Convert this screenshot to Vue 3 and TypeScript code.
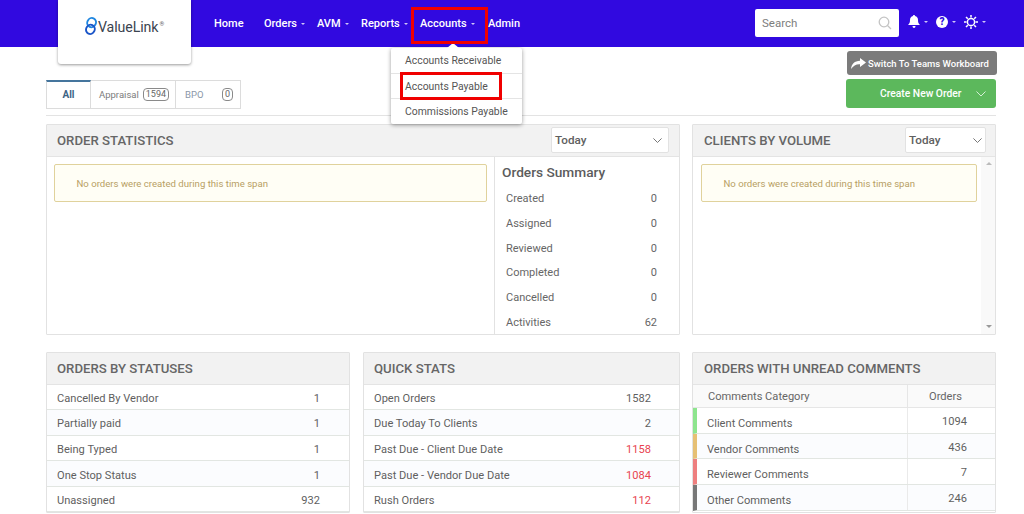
<script setup lang="ts">
const nav = [
  { label: 'Home', caret: false, w: 50 },
  { label: 'Orders', caret: true, w: 53 },
  { label: 'AVM', caret: true, w: 44 },
  { label: 'Reports', caret: true, w: 59 },
  { label: 'Accounts', caret: true, w: 68, hot: true },
  { label: 'Admin', caret: false, w: 40 },
]
const summary = [['Created', 0], ['Assigned', 0], ['Reviewed', 0], ['Completed', 0], ['Cancelled', 0], ['Activities', 62]]
const statuses = [['Cancelled By Vendor', 1], ['Partially paid', 1], ['Being Typed', 1], ['One Stop Status', 1], ['Unassigned', 932]]
const quick = [
  ['Open Orders', 1582, false], ['Due Today To Clients', 2, false], ['Past Due - Client Due Date', 1158, true],
  ['Past Due - Vendor Due Date', 1084, true], ['Rush Orders', 112, true],
]
const comments = [
  ['Client Comments', 1094, '#8ee58e'], ['Vendor Comments', 436, '#e6c074'],
  ['Reviewer Comments', 7, '#ee7f7f'], ['Other Comments', 246, '#777777'],
]
</script>

<template>
  <div class="page">
    <header class="top">
      <div class="logo">
        <svg width="12" height="18" viewBox="0 0 12 18" fill="none" stroke-width="1.900">
          <ellipse cx="6.600" cy="5.600" rx="4.300" ry="4.700" stroke="#1f86e0" transform="rotate(25 6.600 5.600)" />
          <ellipse cx="5.400" cy="12.400" rx="4.300" ry="4.700" stroke="#1a55c8" transform="rotate(25 5.400 12.400)" />
        </svg>
        <span class="logo-text">ValueLink</span><sup class="reg">®</sup>
      </div>
      <nav class="nav">
        <div v-for="n in nav" :key="n.label" class="nav-item" :class="{ hot: n.hot }" :style="{ width: n.w + 'px' }">
          {{ n.label }}<span v-if="n.caret" class="caret"></span>
        </div>
      </nav>
      <div class="right">
        <div class="search">
          <span>Search</span>
          <svg width="14" height="14" viewBox="0 0 14 14" fill="none" stroke="#c4c4c4" stroke-width="1.300">
            <circle cx="6" cy="6" r="4.800" /><path d="M9.500 9.500 13 13" />
          </svg>
        </div>
        <div class="tool">
          <svg width="12" height="13" viewBox="0 0 12 13" fill="#fff"><path d="M6 0c.6 0 1 .4 1 1 2 .4 3 2 3 4 0 2.500.6 3.500 2 5H0c1.400-1.500 2-2.500 2-5 0-2 1-3.600 3-4 0-.6.400-1 1-1Z" /><path d="M4.500 11h3C7.500 12 6.800 13 6 13s-1.500-1-1.500-2Z" /></svg>
          <span class="caret"></span>
        </div>
        <div class="tool">
          <span class="help">?</span><span class="caret"></span>
        </div>
        <div class="tool">
          <svg width="14" height="14" viewBox="0 0 14 14" fill="none" stroke="#fff" stroke-width="1.500">
            <circle cx="7" cy="7" r="3.600" />
            <path d="M7 0v2.500M7 11.500V14M0 7h2.500M11.500 7H14M2 2l1.800 1.800M10.200 10.200 12 12M12 2l-1.800 1.800M3.800 10.200 2 12" />
          </svg>
          <span class="caret"></span>
        </div>
      </div>
    </header>

    <div class="menu">
      <div class="menu-item">Accounts Receivable</div>
      <div class="menu-item">Accounts Payable</div>
      <div class="menu-item">Commissions Payable</div>
    </div>
    <div class="mark-menu"></div>

    <main class="main">
      <div class="toolbar">
        <div class="tabs">
          <div class="tab active">All</div>
          <div class="tab appraisal">Appraisal <span class="count">1594</span></div>
          <div class="tab bpo"><span>BPO</span> <span class="count">0</span></div>
        </div>
        <div class="actions">
          <div class="switch">
            <svg width="15" height="11" viewBox="0 0 15 11" fill="#fff"><path d="M9 0l6 4.500L9 9V6.200C5 6 2.500 7.500 0 11 .6 6 3.500 3 9 2.800V0Z" /></svg>
            Switch To Teams Workboard
          </div>
          <div class="create">
            <span>Create New Order</span>
            <svg width="10" height="6" viewBox="0 0 10 6" fill="none" stroke="#d4efd4" stroke-width="1"><path d="M.5.5 5 5 9.500.5" /></svg>
          </div>
        </div>
      </div>
      <div class="rule"></div>

      <div class="row first">
        <section class="panel wide">
          <div class="head tall">
            <h2>ORDER STATISTICS</h2>
            <div class="select big"><span>Today</span><svg width="9" height="5" viewBox="0 0 9 5" fill="none" stroke="#777" stroke-width="1"><path d="M.4.4 4.500 4.500 8.600.4" /></svg></div>
          </div>
          <div class="stats-body">
            <div class="stats-left">
              <div class="alert">No orders were created during this time span</div>
            </div>
            <div class="summary">
              <h3>Orders Summary</h3>
              <div v-for="s in summary" :key="s[0]" class="sum-row"><span>{{ s[0] }}</span><span>{{ s[1] }}</span></div>
            </div>
          </div>
        </section>
        <section class="panel side">
          <div class="head tall">
            <h2>CLIENTS BY VOLUME</h2>
            <div class="select small"><span>Today</span><svg width="9" height="5" viewBox="0 0 9 5" fill="none" stroke="#777" stroke-width="1"><path d="M.4.4 4.500 4.500 8.600.4" /></svg></div>
          </div>
          <div class="volume-body">
            <div class="volume-left"><div class="alert">No orders were created during this time span</div></div>
            <div class="scroll"><span class="up"></span><span class="down"></span></div>
          </div>
        </section>
      </div>

      <div class="row second">
        <section class="panel col-a">
          <div class="head"><h2>ORDERS BY STATUSES</h2></div>
          <div v-for="(s, i) in statuses" :key="s[0]" class="line" :class="{ odd: i % 2 === 1 }">
            <span>{{ s[0] }}</span><span class="num-a">{{ s[1] }}</span>
          </div>
        </section>
        <section class="panel col-b">
          <div class="head"><h2>QUICK STATS</h2></div>
          <div v-for="(q, i) in quick" :key="String(q[0])" class="line" :class="{ odd: i % 2 === 1 }">
            <span>{{ q[0] }}</span><span class="num-b" :class="{ red: q[2] }">{{ q[1] }}</span>
          </div>
        </section>
        <section class="panel side">
          <div class="head"><h2>ORDERS WITH UNREAD COMMENTS</h2></div>
          <div class="c-head"><span class="c-cat">Comments Category</span><span class="c-ord">Orders</span></div>
          <div v-for="(c, i) in comments" :key="String(c[0])" class="c-row" :class="{ odd: i % 2 === 1 }" :style="{ borderLeftColor: String(c[2]) }">
            <span class="c-name">{{ c[0] }}</span><span class="c-val">{{ c[1] }}</span>
          </div>
        </section>
      </div>
    </main>
  </div>
</template>

<style>
html, body { margin: 0; background: #fff; overflow: hidden; }
</style>

<style scoped>
* { box-sizing: border-box; }
.page { position: relative; width: 1024px; height: 514px; overflow: hidden; font-family: Roboto, "Liberation Sans", sans-serif; font-size: 11px; color: #5c5c5c; }
.top { height: 46.500px; background: #3109e0; display: flex; align-items: flex-start; padding-left: 58px; color: #fff; }
.logo { width: 133px; height: 64px; background: #fff; border-radius: 0 0 3px 3px; box-shadow: 0 1px 3px rgba(0,0,0,.4); display: flex; align-items: flex-start; padding: 17px 0 0 27px; position: relative; z-index: 3; }
.logo-text { font-size: 14.200px; color: #3c4450; line-height: 19px; margin: 1px 0 0 1px; letter-spacing: -.1px; }
.reg { font-size: 6px; color: #666; line-height: 10px; margin: 2px 0 0 1px; }
.nav { display: flex; margin-left: 23px; height: 46px; align-items: center; font-weight: 500; font-size: 11px; }
.nav-item { position: relative; white-space: nowrap; display: flex; align-items: center; font-weight: 500; font-size: 11px; color: #fff; height: 34px; }
.nav-item.hot::after { content: ""; box-sizing: border-box; position: absolute; left: -9px; top: 1px; width: 76.500px; height: 36.500px; border: 3.500px solid #f00000; z-index: 6; }
.caret { display: inline-block; width: 0; height: 0; margin-left: 4px; margin-top: 1px; border-left: 2px solid transparent; border-right: 2px solid transparent; border-top: 2px solid #cfc6f7; }
.right { margin-left: auto; display: flex; align-items: center; height: 46px; padding-right: 30px; }
.search { width: 144px; height: 28px; margin-top: -1px; background: #fff; border-radius: 2px; display: flex; align-items: center; justify-content: space-between; padding: 0 7px; color: #7d7d7d; font-size: 11.500px; margin-right: 9px; }
.tool { display: flex; align-items: center; margin-right: 8px; height: 20px; margin-top: -3px; }
.help { width: 12px; height: 12px; border-radius: 50%; background: #fff; color: #3109e0; font-weight: 900; font-size: 10px; line-height: 12px; text-align: center; }

.menu { position: absolute; left: 391px; top: 48px; width: 131px; height: 76px; background: #fff; border-radius: 2px; box-shadow: 0 1px 4px rgba(0,0,0,.4); z-index: 4; }
.menu::before { content: ""; position: absolute; left: 56px; top: -5px; border-left: 6px solid transparent; border-right: 6px solid transparent; border-bottom: 5px solid #fff; }
.menu-item { height: 25.500px; padding-left: 14px; line-height: 25px; font-size: 10.400px; color: #555; border-bottom: 1px solid #e4e4e4; white-space: nowrap; }
.menu-item:last-child { border-bottom: 0; }
.mark-menu { position: absolute; left: 399.500px; top: 71.500px; width: 102px; height: 28px; border: 3.500px solid #f00000; z-index: 5; }

.main { padding: 0 28px 0 46px; }
.toolbar { height: 68px; display: flex; justify-content: space-between; align-items: flex-start; }
.tabs { display: flex; margin-top: 33px; height: 29px; border: 1px solid #dcdcdc; border-left: 0; }
.tab { height: 27px; line-height: 27px; font-size: 9.500px; color: #7c7c7c; border-right: 1px solid #dcdcdc; white-space: nowrap; display: flex; align-items: center; }
.tab.active { width: 45px; margin-top: -1px; height: 28px; border-top: 2px solid #45759d; border-left: 1px solid #dcdcdc; justify-content: center; font-weight: 700; color: #3d6485; font-size: 10px; }
.tab.appraisal { width: 85px; padding-left: 8px; gap: 4px; }
.tab.bpo { width: 64px; border-right: 0; padding: 0 7px 0 9px; justify-content: space-between; color: #8a97a8; }
.count { border: 1px solid #8a8a8a; border-radius: 4px; font-size: 9px; line-height: 11px; height: 13px; padding: 0 2px; color: #666; }
.actions { width: 152px; margin-top: 4.500px; display: flex; flex-direction: column; align-items: flex-end; }
.switch { width: 150px; height: 24px; margin-right: -1px; background: #7b7b7b; border-radius: 3px; color: #fff; font-size: 9.500px; font-weight: 500; display: flex; align-items: center; gap: 2px; padding-left: 4px; white-space: nowrap; }
.create { width: 150px; height: 29px; margin-top: 4px; background: #5cb85c; border-radius: 3px; color: #fff; font-size: 10.300px; font-weight: 500; display: flex; align-items: center; justify-content: space-between; padding: 0 10px 0 34px; }
.rule { height: 1px; background: #e3e3e3; }

.row { display: flex; }
.first { margin-top: 8px; height: 211px; gap: 12px; }
.second { margin-top: 17px; gap: 13px; }
.panel { border: 1px solid #e2e2e2; background: #fff; border-radius: 1px; }
.wide { width: 634px; }
.side { width: 304px; }
.side .head { padding-left: 11px; }
.col-a { width: 304px; }
.col-b { width: 317px; margin-right: -1px; }
.head { height: 32px; background: #f2f2f2; border-bottom: 1px solid #e4e4e4; display: flex; align-items: center; justify-content: space-between; padding-left: 10px; }
h2 { margin: 0; font-size: 13.200px; font-weight: 500; color: #666; letter-spacing: 0; white-space: nowrap; }
.select { height: 26px; background: #fff; border: 1px solid #e2e2e2; border-radius: 2px; display: flex; align-items: center; justify-content: space-between; font-size: 11.700px; font-weight: 500; color: #606060; }
.select.big { width: 118px; margin-right: 10px; padding: 0 6px 0 3px; }
.select.small { width: 81px; margin-right: 9px; padding: 0 3px 0 3px; }
.stats-body { display: flex; height: 177px; }
.stats-left { width: 447px; padding: 7px 7px 0 7px; }
.alert { height: 38.500px; background: #fffef5; border: 1px solid #e0d29c; border-radius: 2px; color: #b8a064; font-size: 9.600px; line-height: 37px; padding-left: 21.500px; }
.summary { width: 185px; border-left: 1px solid #e2e2e2; padding: 0 22px 0 7px; }
h3 { margin: 0; height: 30px; font-size: 13.700px; font-weight: 500; line-height: 31px; color: #5c5c5c; white-space: nowrap; }
.sum-row { height: 24.700px; display: flex; justify-content: space-between; align-items: center; padding-left: 4px; font-size: 11px; color: #666; }
.volume-body { display: flex; height: 177px; }
.volume-left { flex: 1; padding: 7px 4px 0 8px; }
.scroll { width: 14px; position: relative; background: #f9f9f9; }
.up, .down { position: absolute; left: 5px; border-left: 3px solid transparent; border-right: 3px solid transparent; }
.up { top: 5px; border-bottom: 3px solid #bbb; }
.down { bottom: 6px; border-top: 3px solid #999; }
.line { height: 25.600px; display: flex; align-items: center; justify-content: space-between; padding: 3px 0 0 10px; border-bottom: 1px solid #e2e6e2; font-size: 11.100px; color: #5f5f5f; background: #fff; }
.line.odd { background: #fbfcfe; }
.num-a { padding-right: 29px; }
.num-b { padding-right: 28px; }
.red { color: #e8434f; }
.c-head { height: 23.500px; display: flex; align-items: center; background: #fafafa; border-bottom: 1px solid #e6e6e6; font-size: 11.100px; color: #666; }
.c-cat { width: 215px; padding-left: 15px; height: 100%; line-height: 23px; border-right: 1px solid #e6e6e6; }
.c-ord { padding-left: 21px; padding-top: 1px; }
.c-row { height: 25.700px; display: flex; border-left: 4px solid; border-bottom: 1px solid #e2e6e2; font-size: 11.100px; color: #5f5f5f; background: #fff; }
.c-row.odd { background: #fbfcfe; }
.c-name { width: 211px; padding: 9px 0 0 10px; border-right: 1px solid #eaeaea; }
.c-val { flex: 1; text-align: right; padding: 7px 28px 0 0; }
</style>
